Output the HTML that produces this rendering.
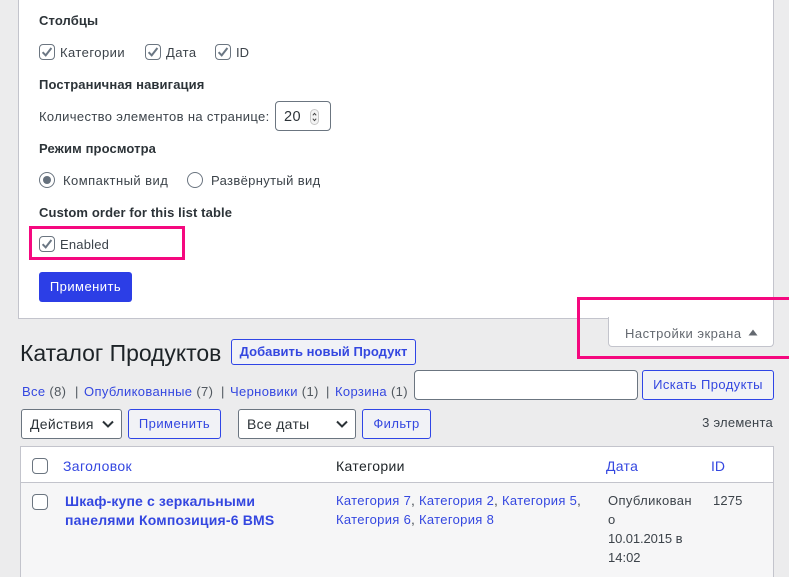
<!DOCTYPE html>
<html lang="ru"><head><meta charset="utf-8"><style>
html,body{margin:0;padding:0;width:789px;height:577px;overflow:hidden;background:#ececed;font-family:"Liberation Sans",sans-serif;font-size:13px;color:#3c434a}
#w{position:absolute;left:0;top:0;width:789px;height:577px;overflow:hidden}
.a{position:absolute;white-space:nowrap;line-height:18px;letter-spacing:.45px}
.b{font-weight:bold;color:#2c3338;letter-spacing:.12px}
.s{letter-spacing:.35px}
.h{font-size:14px;letter-spacing:.35px;top:457px}
.l{color:#3447e0}
.box{position:absolute;box-sizing:border-box}
.cb{position:absolute;box-sizing:border-box;width:16px;height:16px;border:1px solid #6b7580;border-radius:4px;background:#fff}
.cb svg{position:absolute;left:0;top:0}
.btn{position:absolute;box-sizing:border-box;border:1px solid #2f45e6;border-radius:3px;background:#f1f2f6;color:#3447e0;text-align:center;line-height:28px;white-space:nowrap;letter-spacing:.45px}
.sel{position:absolute;box-sizing:border-box;height:30px;border:1px solid #6b7580;border-radius:3px;background:#fff;color:#2c3338;line-height:28px;padding-left:8px;font-size:14px;letter-spacing:.3px}
.sel svg{position:absolute;right:6px;top:10px}
</style></head><body><div id="w">
<div class="box" style="left:18px;top:-2px;width:756px;height:321px;background:#fff;border:1px solid #c3c4cc"></div>
<div class="box" style="left:608px;top:317px;width:166px;height:30px;background:#fff;border:1px solid #c3c4cc;border-top:0;border-radius:0 0 4px 4px"></div>
<div class="box" style="left:609px;top:316px;width:164px;height:3px;background:#fff"></div>

<div class="a b" style="left:39px;top:12px">Столбцы</div>
<div class="cb" style="left:39px;top:44px"><svg width="14" height="14" viewBox="0 0 14 14"><path d="M2.6 7.2 5.7 10.4 11.4 3" fill="none" stroke="#6b7784" stroke-width="2"/></svg></div>
<div class="a" style="left:60px;top:44px">Категории</div>
<div class="cb" style="left:145px;top:44px"><svg width="14" height="14" viewBox="0 0 14 14"><path d="M2.6 7.2 5.7 10.4 11.4 3" fill="none" stroke="#6b7784" stroke-width="2"/></svg></div>
<div class="a" style="left:166px;top:44px">Дата</div>
<div class="cb" style="left:215px;top:44px"><svg width="14" height="14" viewBox="0 0 14 14"><path d="M2.6 7.2 5.7 10.4 11.4 3" fill="none" stroke="#6b7784" stroke-width="2"/></svg></div>
<div class="a" style="left:236px;top:44px;letter-spacing:0">ID</div>

<div class="a b" style="left:39px;top:76px">Постраничная навигация</div>
<div class="a s" style="left:39px;top:108px">Количество элементов на странице:</div>
<div class="box" style="left:275px;top:101px;width:56px;height:30px;border:1px solid #6b7580;border-radius:4px;background:#fff"></div>
<div class="a" style="left:284px;top:108px;font-size:14.5px;color:#2c3338">20</div>
<svg class="box" style="left:310px;top:109px" width="9" height="16" viewBox="0 0 9 16"><rect x=".5" y=".5" width="8" height="15" rx="4" fill="#f4f4f4" stroke="#c8c8c8"/><path d="M2.8 6.3 4.5 4.4 6.2 6.3M2.8 9.7 4.5 11.6 6.2 9.7" fill="none" stroke="#444" stroke-width="1"/></svg>

<div class="a b" style="left:39px;top:140px">Режим просмотра</div>
<div class="box" style="left:39px;top:172px;width:16px;height:16px;border:1px solid #6b7580;border-radius:50%;background:#fff"></div>
<div class="box" style="left:43px;top:176px;width:8px;height:8px;border-radius:50%;background:#66717d"></div>
<div class="a" style="left:63px;top:172px">Компактный вид</div>
<div class="box" style="left:187px;top:172px;width:16px;height:16px;border:1px solid #6b7580;border-radius:50%;background:#fff"></div>
<div class="a s" style="left:211px;top:172px">Развёрнутый вид</div>

<div class="a b" style="left:39px;top:204px">Custom order for this list table</div>
<div class="cb" style="left:39px;top:236px"><svg width="14" height="14" viewBox="0 0 14 14"><path d="M2.6 7.2 5.7 10.4 11.4 3" fill="none" stroke="#6b7784" stroke-width="2"/></svg></div>
<div class="a" style="left:60px;top:236px;letter-spacing:.2px">Enabled</div>
<div class="box" style="left:39px;top:272px;width:93px;height:30px;background:#2c3ee6;border-radius:3px;color:#fff;text-align:center;line-height:30px;letter-spacing:.45px">Применить</div>

<div class="a" style="left:625px;top:325px;color:#646970;letter-spacing:.5px">Настройки экрана</div>
<svg class="box" style="left:748px;top:329px" width="10" height="7" viewBox="0 0 10 7"><path d="M5 .5 9.5 6.5H.5Z" fill="#646970"/></svg>

<div class="a" style="left:20px;top:339px;font-size:23px;line-height:28px;letter-spacing:-.05px;color:#1d2327">Каталог Продуктов</div>
<div class="btn" style="left:231px;top:339px;width:185px;height:26px;line-height:24px;font-weight:bold;letter-spacing:.05px">Добавить новый Продукт</div>

<div class="a s" style="left:22px;top:383px"><span class="l">Все</span> <span style="color:#50575e">(8)</span></div>
<div class="a" style="left:75px;top:383px;color:#50575e">|</div>
<div class="a s" style="left:84px;top:383px"><span class="l">Опубликованные</span> <span style="color:#50575e">(7)</span></div>
<div class="a" style="left:221px;top:383px;color:#50575e">|</div>
<div class="a s" style="left:230px;top:383px"><span class="l">Черновики</span> <span style="color:#50575e">(1)</span></div>
<div class="a" style="left:326px;top:383px;color:#50575e">|</div>
<div class="a s" style="left:335px;top:383px"><span class="l">Корзина</span> <span style="color:#50575e">(1)</span></div>

<div class="box" style="left:414px;top:370px;width:224px;height:30px;border:1px solid #6b7580;border-radius:4px;background:#fff"></div>
<div class="btn" style="left:642px;top:370px;width:132px;height:30px;letter-spacing:.4px">Искать Продукты</div>

<div class="sel" style="left:21px;top:409px;width:101px">Действия<svg width="14" height="9" viewBox="0 0 14 9"><path d="M2 1.5 7 6.5 12 1.5" fill="none" stroke="#2c3338" stroke-width="2"/></svg></div>
<div class="btn" style="left:128px;top:409px;width:93px;height:30px">Применить</div>
<div class="sel" style="left:238px;top:409px;width:118px">Все даты<svg width="14" height="9" viewBox="0 0 14 9"><path d="M2 1.5 7 6.5 12 1.5" fill="none" stroke="#2c3338" stroke-width="2"/></svg></div>
<div class="btn" style="left:362px;top:409px;width:69px;height:30px">Фильтр</div>
<div class="a" style="right:16px;top:414px;color:#3c434a;letter-spacing:.25px">3 элемента</div>

<div class="box" style="left:20px;top:446px;width:754px;height:131px;background:#f6f6f7;border:1px solid #c3c4cc;border-bottom:0"></div>
<div class="box" style="left:21px;top:447px;width:752px;height:36px;background:#fff;border-bottom:1px solid #c3c4cc"></div>
<div class="cb" style="left:32px;top:458px"></div>
<div class="a l h" style="left:63px">Заголовок</div>
<div class="a h" style="left:336px;color:#1d2327">Категории</div>
<div class="a l h" style="left:606px;letter-spacing:.3px">Дата</div>
<div class="a l h" style="left:711px;letter-spacing:0">ID</div>

<div class="cb" style="left:32px;top:494px"></div>
<div class="a l" style="left:65px;top:492px;font-weight:bold;font-size:14px;letter-spacing:.13px">Шкаф-купе с зеркальными</div>
<div class="a l" style="left:65px;top:511px;font-weight:bold;font-size:14px;letter-spacing:.18px">панелями Композиция-6 BMS</div>
<div class="a" style="left:336px;top:492px;letter-spacing:.32px"><span class="l">Категория 7</span>, <span class="l">Категория 2</span>, <span class="l">Категория 5</span>,</div>
<div class="a" style="left:336px;top:511px;letter-spacing:.32px"><span class="l">Категория 6</span>, <span class="l">Категория 8</span></div>
<div class="a" style="left:608px;top:492px;letter-spacing:.38px">Опубликован</div>
<div class="a" style="left:608px;top:511px">о</div>
<div class="a" style="left:608px;top:530px;letter-spacing:-.1px">10.01.2015 в</div>
<div class="a" style="left:608px;top:549px;letter-spacing:0">14:02</div>
<div class="a" style="left:713px;top:492px;letter-spacing:.15px">1275</div>

<div class="box" style="left:29px;top:226px;width:156px;height:34px;border:3px solid #f5087f"></div>
<div class="box" style="left:577px;top:297px;width:230px;height:62px;border:3px solid #f5087f"></div>
</div></body></html>
